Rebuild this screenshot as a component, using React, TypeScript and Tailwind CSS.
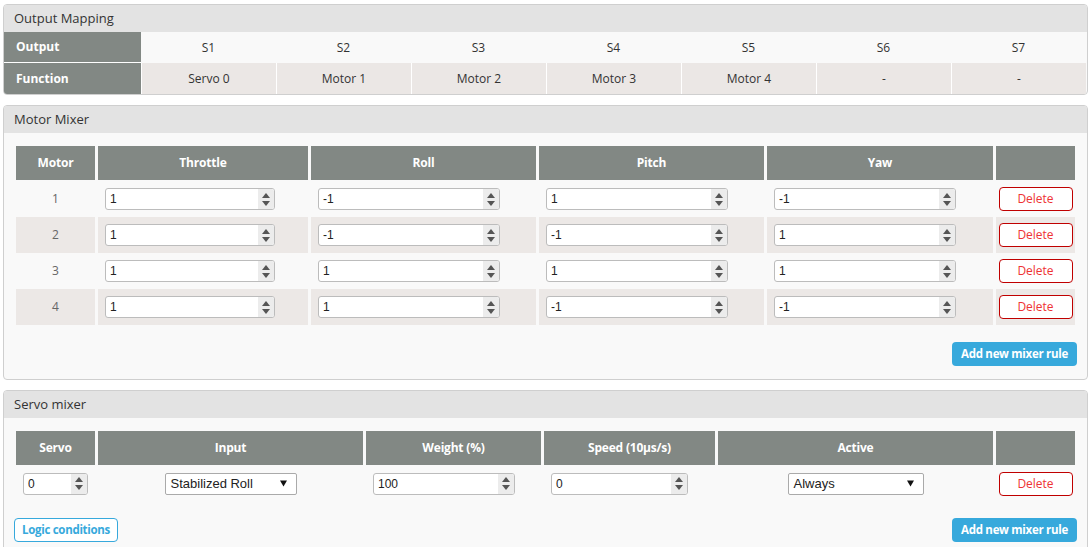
import React from "react";

const ui = "font-['Open_Sans',sans-serif]";
const field = "font-['Liberation_Sans',Arial,sans-serif]";

function Spinner() {
  return (
    <span className="flex w-[16px] flex-col items-center justify-center gap-[3px] bg-[#ececec]">
      <svg width="8" height="5" viewBox="0 0 8 5">
        <path d="M0 5 L4 0 L8 5 Z" fill="#555" />
      </svg>
      <svg width="8" height="5" viewBox="0 0 8 5">
        <path d="M0 0 L8 0 L4 5 Z" fill="#555" />
      </svg>
    </span>
  );
}

function NumInput({ value, className }: { value: string; className: string }) {
  return (
    <div
      className={`flex h-[22px] items-stretch overflow-hidden rounded-[3px] border border-[#bcbcbc] bg-white ${className}`}
    >
      <span className={`${field} flex flex-1 items-center pl-[4px] text-[12px] text-[#222]`}>{value}</span>
      <Spinner />
    </div>
  );
}

function Select({ value, className }: { value: string; className: string }) {
  return (
    <div
      className={`${field} flex h-[22px] items-center justify-between rounded-[2px] border border-[#aaa] bg-white pl-[5px] pr-[9px] text-[13px] text-[#222] ${className}`}
    >
      <span>{value}</span>
      <svg width="7" height="7" viewBox="0 0 7 7">
        <path d="M0 0.5 L7 0.5 L3.5 6.5 Z" fill="#111" />
      </svg>
    </div>
  );
}

function DeleteBtn() {
  return (
    <button
      className={`${ui} h-[24px] w-[74px] rounded-[4px] border border-[#c00000] bg-white text-[12px] text-[#ee3333]`}
    >
      Delete
    </button>
  );
}

function Section({ title, children }: { title: string; children: React.ReactNode }) {
  return (
    <div className="mx-[3px] overflow-hidden rounded-[4px] border border-[#cfcfcf] bg-[#f9f9f9]">
      <div className={`${ui} flex h-[27px] items-center bg-[#e3e3e3] pl-[10px] text-[13px] text-[#333]`}>
        {title}
      </div>
      {children}
    </div>
  );
}

const outputs = ["S1", "S2", "S3", "S4", "S5", "S6", "S7"];
const functions = ["Servo 0", "Motor 1", "Motor 2", "Motor 3", "Motor 4", "-", "-"];

const motorRules = [
  ["1", "-1", "1", "-1"],
  ["1", "-1", "-1", "1"],
  ["1", "1", "1", "1"],
  ["1", "1", "-1", "-1"],
];

const headCell = `${ui} flex h-[34px] items-center justify-center bg-[#828884] text-[12px] font-bold tracking-[-0.2px] text-white`;
const motorCols = "grid grid-cols-[79px_210px_225px_225px_226px_79px] gap-x-[3px]";
const servoCols = "grid grid-cols-[79px_265px_175px_171px_275px_79px] gap-x-[3px]";
const addBtn =
  "mr-[-2px] h-[24px] w-[125px] rounded-[4px] bg-[#37a9dc] text-[11.5px] font-bold tracking-[-0.3px] text-white";

export default function App() {
  return (
    <div className={`${ui} min-h-[547px] bg-white pt-[4px]`}>
      <Section title="Output Mapping">
        <div className="grid grid-cols-[137px_repeat(7,135px)] text-[12px] text-[#333]">
          <div className="flex h-[31px] items-center border-b border-white bg-[#828884] pl-[12px] font-bold text-white">
            Output
          </div>
          {outputs.map((o) => (
            <div key={o} className="flex h-[31px] items-center justify-center bg-[#f9f9f9]">
              {o}
            </div>
          ))}
          <div className="flex h-[31px] items-center bg-[#828884] pl-[12px] font-bold text-white">Function</div>
          {functions.map((f, i) => (
            <div
              key={i}
              className="flex h-[31px] items-center justify-center border-l border-white bg-[#ebe7e5]"
            >
              {f}
            </div>
          ))}
        </div>
      </Section>

      <div className="h-[10px]" />

      <Section title="Motor Mixer">
        <div className="px-[12px] pt-[13px] pb-[13px]">
          <div className={`${motorCols} mb-px`}>
            {["Motor", "Throttle", "Roll", "Pitch", "Yaw", ""].map((h, i) => (
              <div key={i} className={headCell}>
                {h}
              </div>
            ))}
          </div>
          {motorRules.map((r, i) => {
            const bg = i % 2 === 1 ? "bg-[#ece8e6]" : "bg-[#f9f9f9]";
            return (
              <div key={i} className={motorCols}>
                <div className={`flex h-[36px] items-center justify-center text-[12px] text-[#666] ${bg}`}>
                  {i + 1}
                </div>
                <div className={`flex h-[36px] items-center pl-[7px] ${bg}`}>
                  <NumInput value={r[0]} className="w-[170px]" />
                </div>
                {r.slice(1).map((v, j) => (
                  <div key={j} className={`flex h-[36px] items-center pl-[7px] ${bg}`}>
                    <NumInput value={v} className="w-[182px]" />
                  </div>
                ))}
                <div className={`flex h-[36px] items-center justify-center ${bg}`}>
                  <DeleteBtn />
                </div>
              </div>
            );
          })}
          <div className="mt-[17px] flex justify-end">
            <button className={addBtn}>Add new mixer rule</button>
          </div>
        </div>
      </Section>

      <div className="h-[10px]" />

      <Section title="Servo mixer">
        <div className="px-[12px] pt-[13px] pb-[14px]">
          <div className={`${servoCols} mb-px`}>
            {["Servo", "Input", "Weight (%)", "Speed (10µs/s)", "Active", ""].map((h, i) => (
              <div key={i} className={headCell}>
                {h}
              </div>
            ))}
          </div>
          <div className={servoCols}>
            <div className="flex h-[35px] items-center justify-center">
              <NumInput value="0" className="w-[65px]" />
            </div>
            <div className="flex h-[35px] items-center justify-center">
              <Select value="Stabilized Roll" className="w-[132px]" />
            </div>
            <div className="flex h-[35px] items-center pl-[7px]">
              <NumInput value="100" className="w-[142px]" />
            </div>
            <div className="flex h-[35px] items-center pl-[7px]">
              <NumInput value="0" className="w-[137px]" />
            </div>
            <div className="flex h-[35px] items-center justify-center">
              <Select value="Always" className="w-[136px]" />
            </div>
            <div className="flex h-[35px] items-center justify-center">
              <DeleteBtn />
            </div>
          </div>
          <div className="mt-[17px] flex items-center justify-between">
            <button className="ml-[-2px] h-[24px] w-[104px] rounded-[4px] border border-[#37a9dc] bg-white text-[11.5px] font-bold tracking-[-0.3px] text-[#37a9dc]">
              Logic conditions
            </button>
            <button className={addBtn}>Add new mixer rule</button>
          </div>
        </div>
      </Section>
    </div>
  );
}
